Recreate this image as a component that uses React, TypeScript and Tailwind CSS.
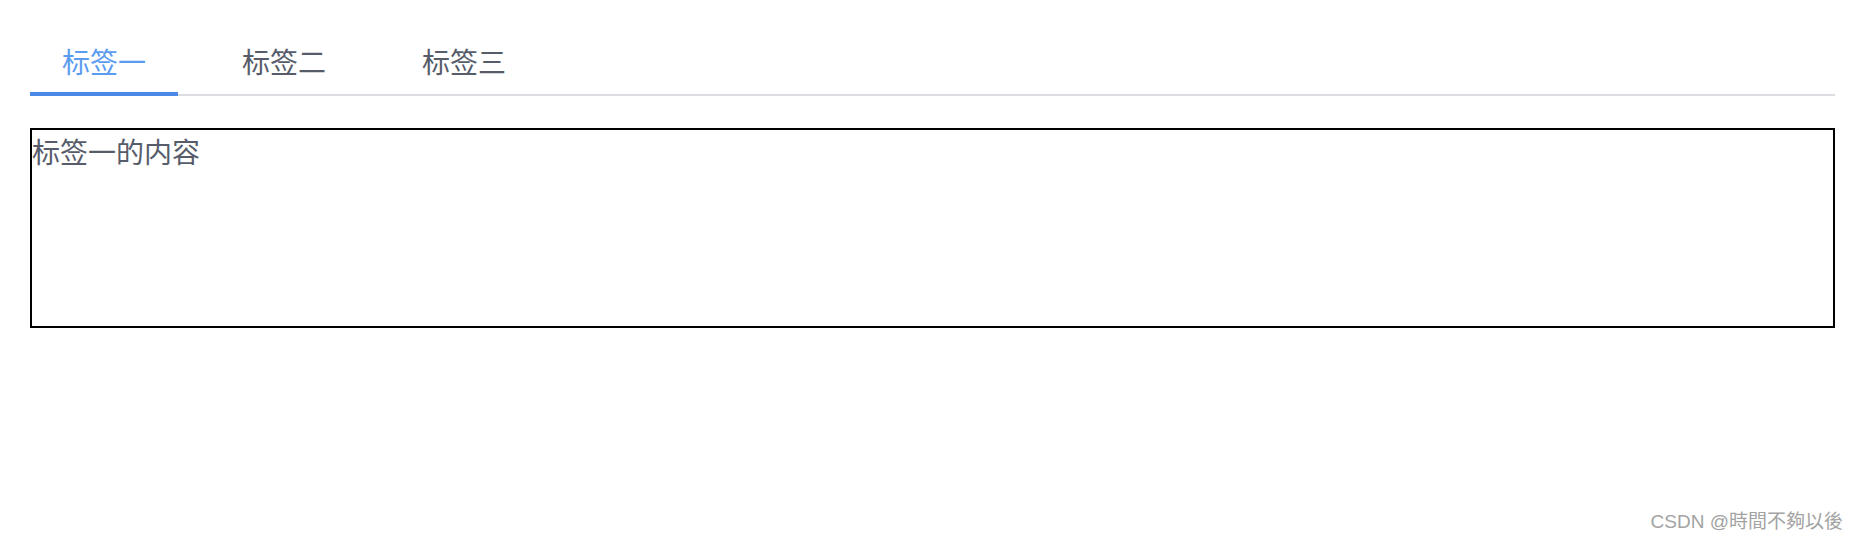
import { useState } from "react";

const tabs = [
  { key: "one", label: "标签一", content: "标签一的内容" },
  { key: "two", label: "标签二", content: "标签二的内容" },
  { key: "three", label: "标签三", content: "标签三的内容" },
];

export default function App() {
  const [active, setActive] = useState("one");
  const current = tabs.find((t) => t.key === active) ?? tabs[0];

  return (
    <div className="relative h-[540px] w-[1860px] bg-white pl-[30px] pr-[25px] pt-[40px] font-['Noto_Sans_CJK_SC','Noto_Sans',sans-serif]">
      <div className="flex gap-[32px] border-b-2 border-[#dcdde2]">
        {tabs.map((t) => (
          <button
            key={t.key}
            onClick={() => setActive(t.key)}
            className={`-mb-[2px] w-[148px] border-b-4 pb-[10px] text-center text-[28px] leading-[42px] ${
              t.key === active ? "border-[#4a88e8] text-[#5b9cf0]" : "border-transparent text-[#575c6b]"
            }`}
          >
            {t.label}
          </button>
        ))}
      </div>
      <div className="mt-[32px] h-[200px] border-2 border-black text-[28px] leading-[42px] text-[#575c6b]">
        {current.content}
      </div>
      <div className="absolute bottom-[4px] right-[17px] text-[19px] leading-[28px] text-[#a3a3a3] font-['Liberation_Sans','Noto_Sans_CJK_TC',sans-serif] [text-shadow:0_0_1px_#fff]">
        CSDN @時間不夠以後
      </div>
    </div>
  );
}
